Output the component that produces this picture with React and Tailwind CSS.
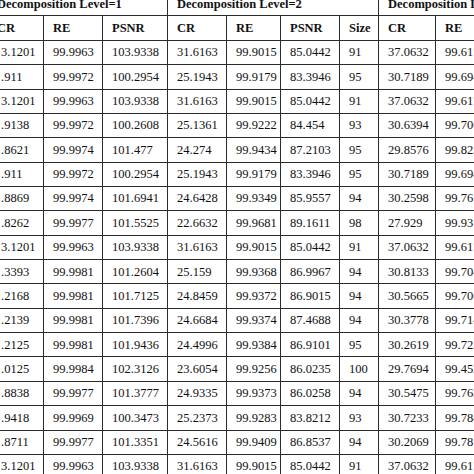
import React from 'react';

// rows of the results table (the first column is cut off by the crop)
const rows = [
  ['3.1201', '99.9963', '103.9338', '31.6163', '99.9015', '85.0442', '91', '37.0632', '99.6174'],
  ['.911', '99.9972', '100.2954', '25.1943', '99.9179', '83.3946', '95', '30.7189', '99.6946'],
  ['3.1201', '99.9963', '103.9338', '31.6163', '99.9015', '85.0442', '91', '37.0632', '99.6174'],
  ['.9138', '99.9972', '100.2608', '25.1361', '99.9222', '84.454', '93', '30.6394', '99.7064'],
  ['.8621', '99.9974', '101.477', '24.274', '99.9434', '87.2103', '95', '29.8576', '99.8231'],
  ['.911', '99.9972', '100.2954', '25.1943', '99.9179', '83.3946', '95', '30.7189', '99.6946'],
  ['.8869', '99.9974', '101.6941', '24.6428', '99.9349', '85.9557', '94', '30.2598', '99.7611'],
  ['.8262', '99.9977', '101.5525', '22.6632', '99.9681', '89.1611', '98', '27.929', '99.9312'],
  ['3.1201', '99.9963', '103.9338', '31.6163', '99.9015', '85.0442', '91', '37.0632', '99.6174'],
  ['.3393', '99.9981', '101.2604', '25.159', '99.9368', '86.9967', '94', '30.8133', '99.7041'],
  ['.2168', '99.9981', '101.7125', '24.8459', '99.9372', '86.9015', '94', '30.5665', '99.7062'],
  ['.2139', '99.9981', '101.7396', '24.6684', '99.9374', '87.4688', '94', '30.3778', '99.7144'],
  ['.2125', '99.9981', '101.9436', '24.4996', '99.9384', '86.9101', '95', '30.2619', '99.7232'],
  ['.0125', '99.9984', '102.3126', '23.6054', '99.9256', '86.0235', '100', '29.7694', '99.4521'],
  ['.8838', '99.9977', '101.3777', '24.9335', '99.9373', '86.0258', '94', '30.5475', '99.7634'],
  ['.9418', '99.9969', '100.3473', '25.2373', '99.9283', '83.8212', '93', '30.7233', '99.7842'],
  ['.8711', '99.9977', '101.3351', '24.5616', '99.9409', '86.8537', '94', '30.2069', '99.7814'],
  ['3.1201', '99.9963', '103.9338', '31.6163', '99.9015', '85.0442', '91', '37.0632', '99.6174'],
];

const widths = [54, 59, 65, 59, 54, 59, 39, 57, 60];
const subHeads = ['CR', 'RE', 'PSNR', 'CR', 'RE', 'PSNR', 'Size', 'CR', 'RE'];

const cell = 'border border-[#2a2a2a] pr-1 text-left whitespace-nowrap overflow-hidden';

export default function App() {
  return (
    <div className="w-[474px] h-[474px] overflow-hidden bg-white">
      <table
        className="table-fixed border-collapse w-[506px] -ml-[11px] -mt-[8px] text-[12.5px] leading-none text-[#111111]"
        style={{ fontFamily: '"Liberation Serif", "Times New Roman", serif' }}
      >
        <colgroup>
          {widths.map((w, i) => (
            <col key={i} style={{ width: w }} />
          ))}
        </colgroup>
        <thead>
          <tr className="h-[23px]">
            <th colSpan={3} className={`${cell} pl-[7px] font-bold`}>Decomposition Level=1</th>
            <th colSpan={4} className={`${cell} pl-[9px] font-bold`}>Decomposition Level=2</th>
            <th colSpan={2} className={`${cell} pl-[9px] font-bold`}>Decomposition Level=3</th>
          </tr>
          <tr className="h-[25px]">
            {subHeads.map((h, i) => (
              <th key={i} className={`${cell} ${i === 0 ? 'pl-[7px]' : 'pl-[9px]'} font-bold`}>{h}</th>
            ))}
          </tr>
        </thead>
        <tbody>
          {rows.map((r, i) => (
            <tr key={i} className="h-[24.35px]">
              {r.map((v, j) => (
                <td key={j} className={`${cell} ${j === 0 ? 'pl-[11px]' : 'pl-[9px]'} font-normal`}>{v}</td>
              ))}
            </tr>
          ))}
        </tbody>
      </table>
    </div>
  );
}
